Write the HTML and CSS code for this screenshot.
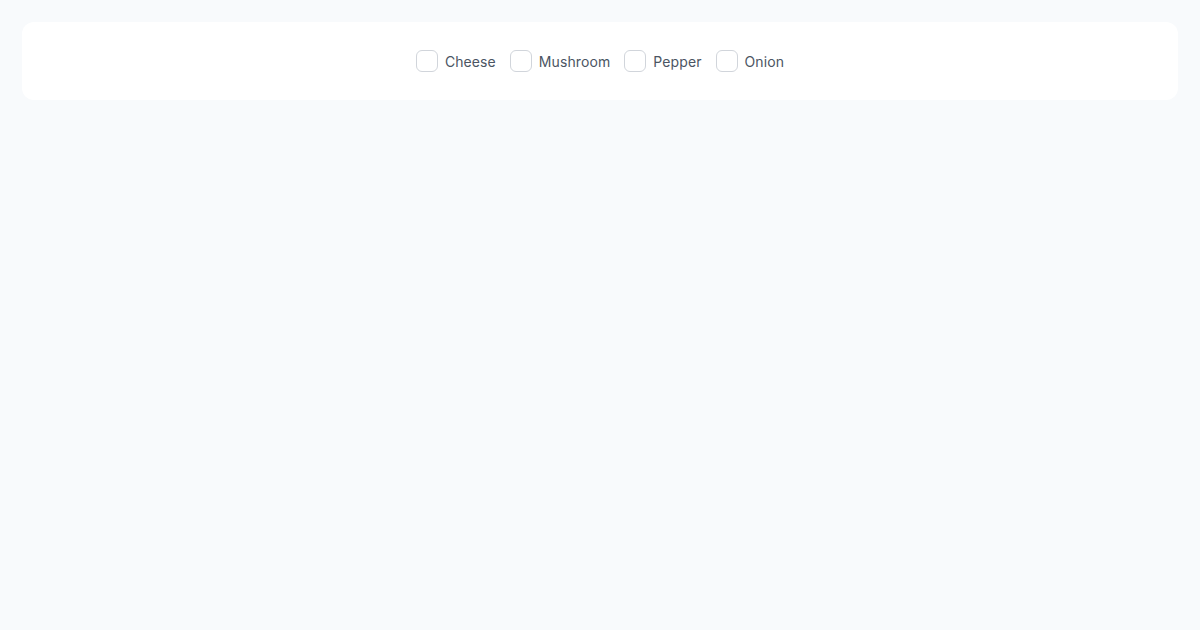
FILE: index.html
```html
<!DOCTYPE html>
<html>
<head>
<meta charset="utf-8">
<link rel="stylesheet" href="styles.css">
</head>
<body>
<div class="card">
  <label class="opt"><span class="box"></span><span class="lbl">Cheese</span></label>
  <label class="opt"><span class="box"></span><span class="lbl">Mushroom</span></label>
  <label class="opt"><span class="box"></span><span class="lbl">Pepper</span></label>
  <label class="opt"><span class="box"></span><span class="lbl">Onion</span></label>
</div>
</body>
</html>
```
FILE: styles.css
```css
html, body { margin: 0; padding: 0; }
body {
  background: #f8fafc;
  font-family: Inter, "Noto Sans", sans-serif;
  padding: 22px;
  width: 1200px;
  height: 630px;
  box-sizing: border-box;
}
.card {
  background: #ffffff;
  border-radius: 12px;
  height: 78px;
  display: flex;
  align-items: center;
  justify-content: center;
  gap: 14px;
}
.opt {
  display: flex;
  align-items: center;
  gap: 7px;
  font-size: 14px;
  letter-spacing: 0.1px;
  color: #4b5563;
}
.box {
  width: 22px;
  height: 22px;
  box-sizing: border-box;
  border: 1.5px solid #d1d5db;
  border-radius: 6px;
  background: #fff;
}
.lbl { line-height: 20px; padding-top: 2px; }
```
